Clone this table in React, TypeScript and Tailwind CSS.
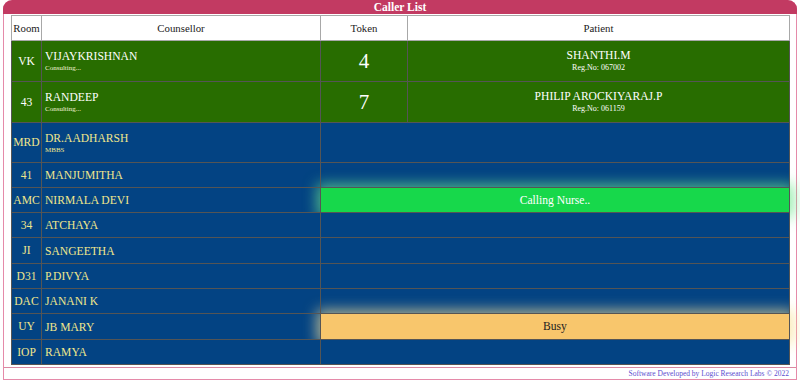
import React from 'react';

type Row = {
  room: string;
  name: string;
  sub?: string;
  token?: string;
  patient?: string;
  reg?: string;
  status?: 'calling' | 'busy';
  h: string;
};

const ROWS: Row[] = [
  { room: 'VK', name: 'VIJAYKRISHNAN', sub: 'Consulting...', token: '4', patient: 'SHANTHI.M', reg: '067002', h: 'h-[41px]' },
  { room: '43', name: 'RANDEEP', sub: 'Consulting...', token: '7', patient: 'PHILIP AROCKIYARAJ.P', reg: '061159', h: 'h-[41px]' },
  { room: 'MRD', name: 'DR.AADHARSH', sub: 'MBBS', h: 'h-[40px]' },
  { room: '41', name: 'MANJUMITHA', h: 'h-[25px]' },
  { room: 'AMC', name: 'NIRMALA DEVI', status: 'calling', h: 'h-[25px]' },
  { room: '34', name: 'ATCHAYA', h: 'h-[25px]' },
  { room: 'JI', name: 'SANGEETHA', h: 'h-[26px]' },
  { room: 'D31', name: 'P.DIVYA', h: 'h-[25px]' },
  { room: 'DAC', name: 'JANANI K', h: 'h-[25px]' },
  { room: 'UY', name: 'JB MARY', status: 'busy', h: 'h-[26px]' },
  { room: 'IOP', name: 'RAMYA', h: 'h-[25px]' },
];

const cell = 'border border-[#555555] p-0 pt-px';

const ActiveRow = ({ r }: { r: Row }) => (
  <tr className={`${r.h} bg-[#286d00] text-white`}>
    <td className={`${cell} text-center text-[11.6px]`}>{r.room}</td>
    <td className={`${cell} pl-[3px] pt-[2px] align-middle`}>
      <div className="text-[11.6px] leading-[13px]">{r.name}</div>
      <div className="text-[7px] leading-[10px] text-[#f4f4d8]">{r.sub}</div>
    </td>
    <td className={`${cell} text-center text-[21px]`}>{r.token}</td>
    <td className={`${cell} text-center`}>
      <div className="text-[11.6px] leading-[13px]">{r.patient}</div>
      <div className="text-[8px] leading-[12px]">Reg.No: {r.reg}</div>
    </td>
  </tr>
);

const IdleRow = ({ r }: { r: Row }) => {
  let right = <td colSpan={2} className={`${cell}`} />;
  if (r.status === 'calling') {
    right = (
      <td colSpan={2} className={`${cell} bg-[#17d84b] text-center text-[11.6px] text-white shadow-[0_0_14px_4px_rgba(110,230,140,0.7)]`}>
        Calling Nurse..
      </td>
    );
  } else if (r.status === 'busy') {
    right = (
      <td colSpan={2} className={`${cell} bg-[#f8c66c] text-center text-[11.6px] text-[#222] shadow-[0_0_14px_4px_rgba(250,225,150,0.7)]`}>
        Busy
      </td>
    );
  }
  return (
    <tr className={`${r.h} bg-[#034383] text-[#f0e68c]`}>
      <td className={`${cell} text-center text-[11.6px]`}>{r.room}</td>
      <td className={`${cell} pl-[3px] align-middle ${r.sub ? 'pt-[2px]' : ''}`}>
        <div className="text-[11.6px] leading-[13px]">{r.name}</div>
        {r.sub && <div className="text-[7px] leading-[10px]">{r.sub}</div>}
      </td>
      {right}
    </tr>
  );
};

export default function App() {
  return (
    <div className="h-[385px] w-[800px] bg-white pl-[3px] pr-[3px] pt-0 font-[family-name:'Liberation_Serif',serif]">
      <div className="h-[380px] rounded-t-[9px] border border-t-0 border-[#e58aa9]">
        <div className="-mx-px h-[14px] rounded-t-[9px] bg-[#c23a62] text-center text-[11.5px] font-bold leading-[14px] text-white">
          Caller List
        </div>
        <div className="px-[7px] pt-px">
          <table className="w-[778px] table-fixed border-collapse border border-[#a8a8a8]">
            <colgroup>
              <col className="w-[30px]" />
              <col className="w-[279px]" />
              <col className="w-[87px]" />
              <col className="w-[382px]" />
            </colgroup>
            <thead>
              <tr className="h-[25px] bg-white text-[10.8px] text-[#222]">
                <th className="border border-[#a8a8a8] p-0 font-normal">Room</th>
                <th className="border border-[#a8a8a8] p-0 font-normal">Counsellor</th>
                <th className="border border-[#a8a8a8] p-0 font-normal">Token</th>
                <th className="border border-[#a8a8a8] p-0 font-normal">Patient</th>
              </tr>
            </thead>
            <tbody>
              {ROWS.map((r, i) =>
                r.token ? <ActiveRow key={i} r={r} /> : <IdleRow key={i} r={r} />
              )}
            </tbody>
          </table>
        </div>
        <div className="mt-[2px] border-t border-[#c23a62]/60 pr-[7px] pt-[1px] text-right text-[7.5px] leading-[10px] text-[#5b4fd0]">
          Software Developed by Logic Research Labs © 2022
        </div>
      </div>
    </div>
  );
}
